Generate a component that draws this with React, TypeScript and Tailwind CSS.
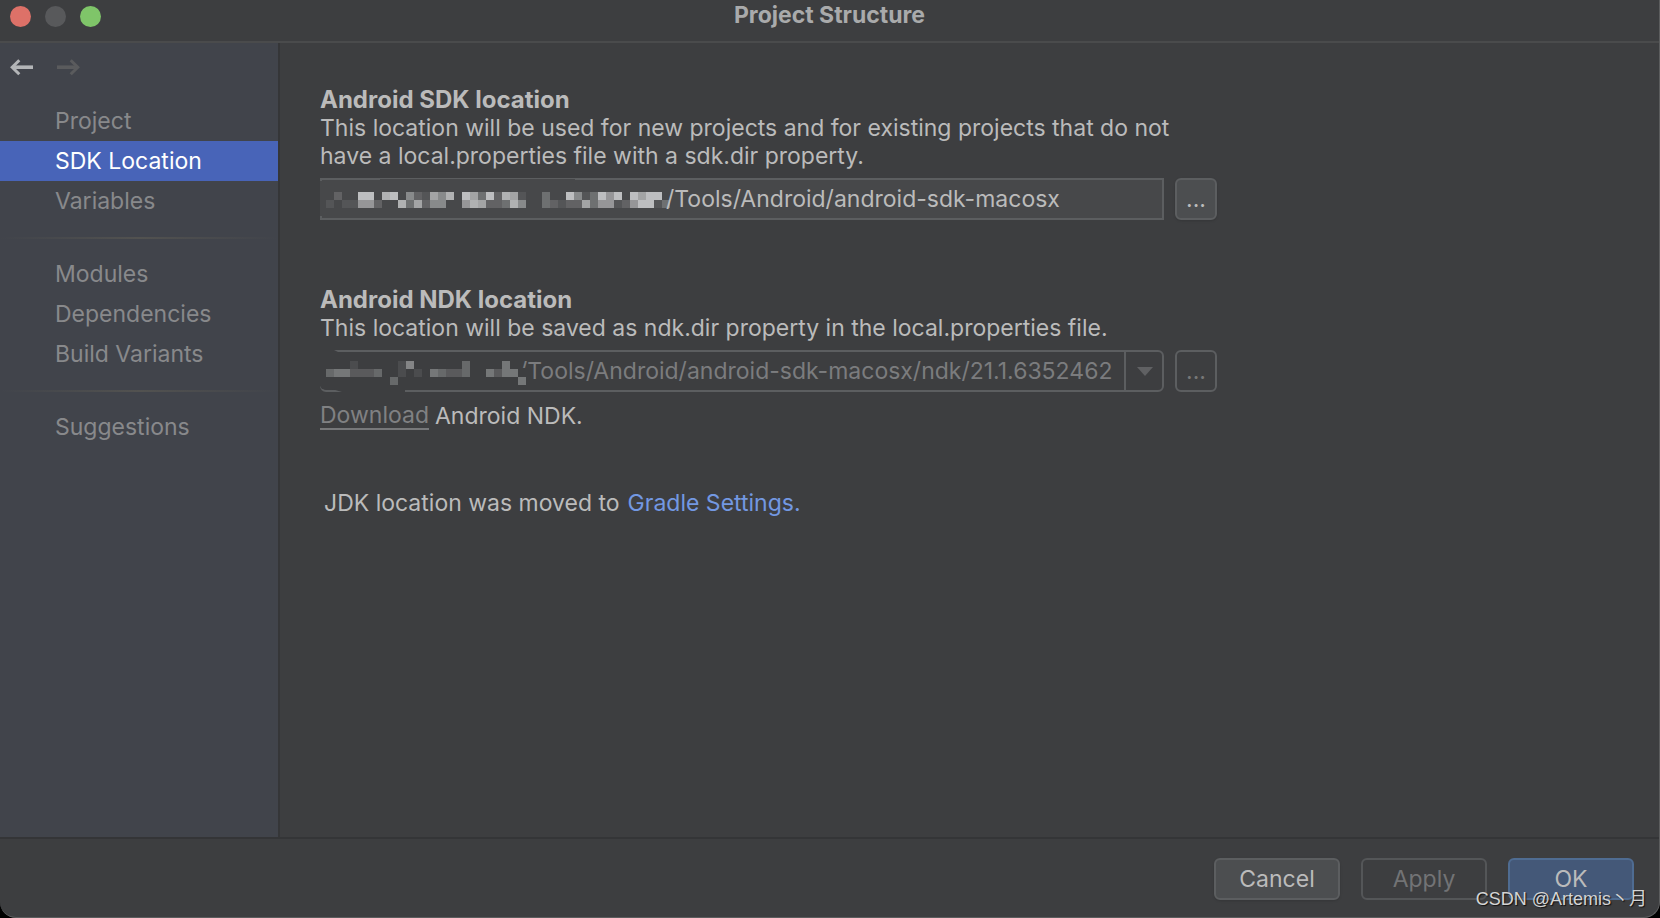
import type { ReactNode } from "react"

const navGroups = [
  ["Project", "SDK Location", "Variables"],
  ["Modules", "Dependencies", "Build Variants"],
  ["Suggestions"],
]

// one character per 8px tile, 0 is transparent and 9 is the brightest
const sdkTiles = [
  "0200990890521758097392" + "871003009513969097990",
  "1011662008372550068722" + "385003212273661269913",
]
const ndkTiles = [
  "0001000001500000030000400",
  "3442223001010432230042440",
  "0000000030000000000000004",
]

function Tiles({ rows }: { rows: string[] }) {
  return (
    <g fill="#c4c5c6">
      {rows.flatMap((row, y) =>
        [...row].map((level, x) =>
          level === "0" ? null : (
            <rect key={`${x}-${y}`} x={x * 8} y={y * 8} width={8} height={8} opacity={Number(level) / 9.5} />
          )
        )
      )}
    </g>
  )
}

function BrowseButton({ label, disabled }: { label: string; disabled?: boolean }) {
  return (
    <button
      type="button"
      aria-label={label}
      disabled={disabled}
      className="h-[42px] w-[42px] shrink-0 rounded-md border-2 border-[#5c5e60] bg-[#4c4e50] shadow-sm disabled:bg-transparent disabled:text-[#777777] disabled:shadow-none"
    >
      ...
    </button>
  )
}

function FooterButton({ children, className, disabled }: { children: ReactNode; className: string; disabled?: boolean }) {
  return (
    <button type="button" disabled={disabled} className={`h-[42px] w-[126px] rounded-md border-2 ${className}`}>
      {children}
    </button>
  )
}

function Sidebar() {
  return (
    <nav className="w-[280px] shrink-0 border-r-2 border-[#353638] bg-[#41444b] text-[#88898b]">
      <div className="flex h-[58px] items-start gap-6 pt-4 pl-2.5">
        <button type="button" aria-label="Back" className="text-[#b3b5b7]">
          <svg width="23" height="17" viewBox="0 0 23 17" fill="none" stroke="currentColor" className="block">
            <path d="M3 8.2H23" strokeWidth="3.6" />
            <path d="M9.3 1.2L2.2 8.2L9.3 15.2" strokeWidth="3" />
          </svg>
        </button>
        <button type="button" aria-label="Forward" disabled className="text-[#5a5b5d]">
          <svg width="23" height="17" viewBox="0 0 23 17" fill="none" stroke="currentColor" className="block">
            <path d="M0 8.2H20" strokeWidth="3.6" />
            <path d="M13.7 1.2L20.8 8.2L13.7 15.2" strokeWidth="3" />
          </svg>
        </button>
      </div>

      {navGroups.map((group, i) => (
        <div key={group[0]}>
          {i > 0 && (
            <div className="mt-4 mb-[15px] h-0.5 bg-linear-to-r from-transparent via-[#525250] to-transparent" />
          )}
          <ul>
            {group.map((item) => (
              <li key={item}>
                <a
                  href="#"
                  className={
                    item === "SDK Location"
                      ? "block bg-[#4864b8] pl-[55px] leading-10 text-white"
                      : "block pl-[55px] leading-10"
                  }
                >
                  {item}
                </a>
              </li>
            ))}
          </ul>
        </div>
      ))}
    </nav>
  )
}

export default function App() {
  return (
    <div className="bg-black font-['Inter',sans-serif] text-[23px] leading-7 text-[#bbbbbb]">
      <div className="relative flex min-h-screen flex-col overflow-hidden rounded-b-2xl border-r border-b border-[#5c5d5e] bg-[#3d3e40]">
        <header className="grid h-[43px] shrink-0 grid-cols-[1fr_auto_1fr] items-start border-b-2 border-[#4a4b4c] pt-px">
          <div className="flex gap-3.5 pt-[5px] pl-2.5">
            <button type="button" aria-label="Close" className="size-[21px] rounded-full bg-[#dd7168]" />
            <button type="button" aria-label="Minimize" disabled className="size-[21px] rounded-full bg-[#58595b]" />
            <button type="button" aria-label="Zoom" className="size-[21px] rounded-full bg-[#7fc569]" />
          </div>
          <h1 className="font-bold text-[#a9aaab]">Project Structure</h1>
        </header>

        <div className="flex flex-1">
          <Sidebar />

          <main className="flex-1 pt-[43px] pl-10">
            {/* SDK */}
            <section className="max-w-[897px]">
              <h2 className="text-2xl leading-7 font-bold">
                <label htmlFor="sdk">Android SDK location</label>
              </h2>
              <p>
                This location will be used for new projects and for existing projects that do not
                <br />
                have a local.properties file with a sdk.dir property.
              </p>
              <div className="mt-2 flex gap-[11px]">
                <div className="relative flex-1">
                  <input
                    id="sdk"
                    type="text"
                    defaultValue="/Tools/Android/android-sdk-macosx"
                    className="h-[42px] w-full border-2 border-[#5c5e60] bg-[#47484a] pl-[344px] outline-none"
                  />
                  <svg width="352" height="42" className="pointer-events-none absolute top-0 left-0" aria-hidden="true">
                    <path d="M0 3H340V38H0Z M60 1H255V2H60Z" fill="#47484a" />
                    <g transform="translate(6 14)">
                      <Tiles rows={sdkTiles} />
                    </g>
                  </svg>
                </div>
                <BrowseButton label="Browse for Android SDK" />
              </div>
            </section>

            {/* NDK */}
            <section className="mt-[66px] max-w-[897px]">
              <h2 className="text-2xl leading-7 font-bold">
                <label htmlFor="ndk">Android NDK location</label>
              </h2>
              <p>This location will be saved as ndk.dir property in the local.properties file.</p>
              <div className="mt-2 flex gap-[11px]">
                <div className="relative flex-1">
                  <select
                    id="ndk"
                    disabled
                    className="block h-[42px] w-full appearance-none rounded-md border-2 border-[#5c5e60] bg-transparent pl-[197px] text-[#7b7c7e] opacity-100"
                  >
                    <option>/Tools/Android/android-sdk-macosx/ndk/21.1.6352462</option>
                  </select>
                  <svg width="220" height="42" className="pointer-events-none absolute top-0 left-0" aria-hidden="true">
                    <path d="M0 0H14L18 2V18H209V37H85V42H22L12 39H2L0 36Z" fill="#3d3e40" />
                    <g transform="translate(6 11)">
                      <Tiles rows={ndkTiles} />
                    </g>
                  </svg>
                  <span className="pointer-events-none absolute inset-y-0 right-0 flex w-10 items-center justify-center border-l-2 border-[#5c5e60]">
                    <svg width="16" height="9" viewBox="0 0 16 9" fill="#606163">
                      <path d="M0 0H16L8 9Z" />
                    </svg>
                  </span>
                </div>
                <BrowseButton label="Browse for Android NDK" disabled />
              </div>
              <p className="mt-2.5 flex gap-1.5">
                <a href="#" className="border-b-2 border-[#77787a] leading-[26px] text-[#808183]">
                  Download
                </a>
                Android NDK.
              </p>
            </section>

            <p className="mt-[59px] flex gap-2 pl-1">
              JDK location was moved to
              <a href="#" className="text-[#7398e2]">
                Gradle Settings.
              </a>
            </p>
          </main>
        </div>

        <footer className="flex h-20 shrink-0 justify-end gap-[21px] border-t-2 border-[#343537] pt-[19px] pr-[25px]">
          <FooterButton className="border-[#5c5e60] bg-[#4c4e50] shadow-sm">Cancel</FooterButton>
          <FooterButton disabled className="border-[#545658] text-[#727375]">
            Apply
          </FooterButton>
          <FooterButton className="border-[#4f6c92] bg-[#445878]">OK</FooterButton>
        </footer>

        <span className="pointer-events-none absolute right-3 bottom-1.5 font-['Liberation_Sans','Noto_Sans_CJK_SC',sans-serif] text-lg leading-6 text-[#d4d4d4] [text-shadow:1px_1px_1px_#111]">
          CSDN @Artemis丶月
        </span>
      </div>
    </div>
  )
}
